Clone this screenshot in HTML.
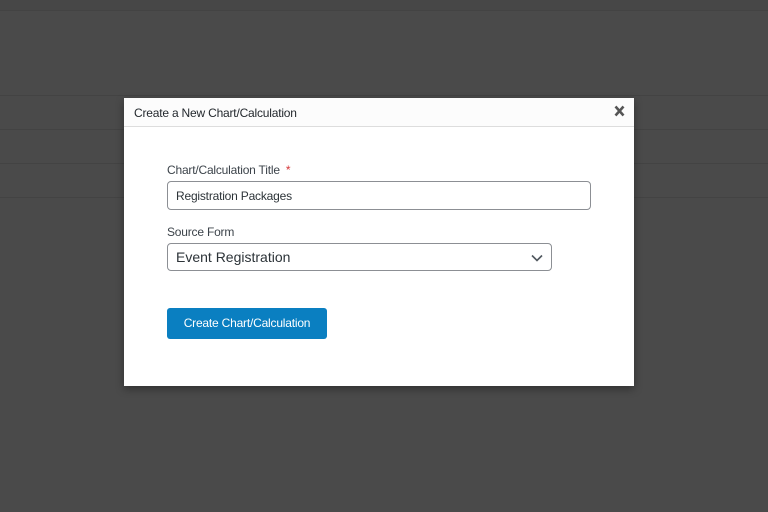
<!DOCTYPE html>
<html><head><style>
*{box-sizing:border-box;margin:0;padding:0}
body{width:768px;height:512px;background:#4a4a4a;position:relative;overflow:hidden;font-family:"Liberation Sans",sans-serif}
.l{position:absolute;left:0;width:768px;height:1px;background:#434343}
.top{position:absolute;left:0;top:0;width:768px;height:10px;background:#474747}
.m{position:absolute;left:124px;top:98px;width:510px;height:288px;background:#fff;box-shadow:0 3px 8px rgba(0,0,0,.35)}
.h{height:29px;background:#fcfcfc;border-bottom:1px solid #ddd;font-size:12px;color:#23282d;padding:8px 10px;letter-spacing:-.2px}
.x{position:absolute;right:9px;top:7px}
.lab{position:absolute;left:43px;font-size:12px;color:#3c434a;letter-spacing:-.2px}
.in{position:absolute;left:43px;border:1px solid #8c8f94;border-radius:4px;color:#2c3338}
.btn{position:absolute;left:43px;top:210px;width:160px;height:31px;background:#0a7fc1;border-radius:3px;color:#fff;font-size:12px;line-height:31px;text-align:center;letter-spacing:-.2px}
</style></head><body>
<div class="top"></div>
<div class="l" style="top:10px"></div>
<div class="l" style="top:95px"></div>
<div class="l" style="top:129px"></div>
<div class="l" style="top:163px"></div>
<div class="l" style="top:197px"></div>
<div class="m">
<div class="h">Create a New Chart/Calculation</div>
<svg class="x" width="11" height="12" viewBox="0 0 11 12"><path d="M1.5 1.5l8 9M9.5 1.5l-8 9" stroke="#555" stroke-width="2.6"/></svg>
<div class="lab" style="top:65px">Chart/Calculation Title <span style="color:#d63638;margin-left:3px">*</span></div>
<div class="in" style="top:83px;width:424px;height:29px;font-size:12px;padding:7px 8px;letter-spacing:-.2px">Registration Packages</div>
<div class="lab" style="top:127px">Source Form</div>
<div class="in" style="top:145px;width:385px;height:28px;font-size:14px;padding:5px 8px">Event Registration
<svg style="position:absolute;right:8px;top:10px" width="12" height="8" viewBox="0 0 12 8"><path d="M1 1.5l5 5 5-5" stroke="#50575e" stroke-width="1.6" fill="none"/></svg></div>
<div class="btn">Create Chart/Calculation</div>
</div>
</body></html>
